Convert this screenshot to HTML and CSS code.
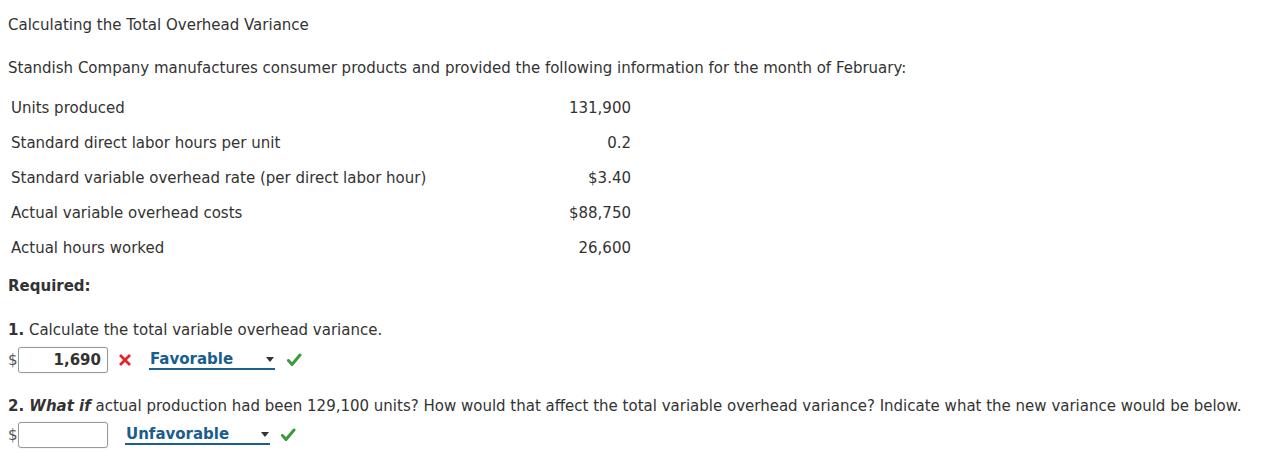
FILE: index.html
```html
<!DOCTYPE html>
<html>
<head>
<meta charset="utf-8">
<link rel="stylesheet" href="styles.css">
</head>
<body>
<div class="page">
  <p class="title">Calculating the Total Overhead Variance</p>
  <p class="intro">Standish Company manufactures consumer products and provided the following information for the month of February:</p>
  <div class="data">
    <div class="row"><span class="lbl">Units produced</span><span class="val">131,900</span></div>
    <div class="row"><span class="lbl">Standard direct labor hours per unit</span><span class="val">0.2</span></div>
    <div class="row"><span class="lbl">Standard variable overhead rate (per direct labor hour)</span><span class="val">$3.40</span></div>
    <div class="row"><span class="lbl">Actual variable overhead costs</span><span class="val">$88,750</span></div>
    <div class="row"><span class="lbl">Actual hours worked</span><span class="val">26,600</span></div>
  </div>
  <p class="req">Required:</p>
  <p class="q q1"><b>1.</b> Calculate the total variable overhead variance.</p>
  <div class="ans ans1">
    <span class="dollar">$</span><span class="box filled">1,690</span>
    <svg class="cross" viewBox="0 0 12 12" width="12" height="12"><path d="M2 2 L10 10 M10 2 L2 10" fill="none" stroke="#e0262d" stroke-width="2.8" stroke-linecap="square"/></svg>
    <span class="sel sel1">Favorable<span class="arrow"></span></span>
    <svg class="check" viewBox="0 0 16 16" width="16" height="16"><path d="M2.5 8.5 L6 12.5 L14 3" fill="none" stroke="#3c9a3c" stroke-width="3" stroke-linecap="round" stroke-linejoin="round"/></svg>
  </div>
  <p class="q q2"><b>2. <i>What if</i></b> actual production had been 129,100 units? How would that affect the total variable overhead variance? Indicate what the new variance would be below.</p>
  <div class="ans ans2">
    <span class="dollar">$</span><span class="box"></span>
    <span class="sel sel2">Unfavorable<span class="arrow"></span></span>
    <svg class="check" viewBox="0 0 16 16" width="16" height="16"><path d="M2.5 8.5 L6 12.5 L14 3" fill="none" stroke="#3c9a3c" stroke-width="3" stroke-linecap="round" stroke-linejoin="round"/></svg>
  </div>
</div>
</body>
</html>
```
FILE: styles.css
```css
html, body { margin: 0; padding: 0; background: #fff; }
body {
  font-family: "DejaVu Sans", Verdana, sans-serif;
  font-size: 15px;
  color: #333;
}
.page { padding: 0 8px; }
p { margin: 0; line-height: 18px; }
.title { padding-top: 16px; }
.intro { margin-top: 25px; }
.data { margin-top: 22px; width: 620px; padding-left: 3px; }
.row { display: flex; justify-content: space-between; height: 35px; line-height: 18px; }
.val { text-align: right; }
.req { font-weight: bold; margin-top: 3px; }
.q1 { margin-top: 26px; }
.ans { display: flex; align-items: center; height: 28px; }
.ans1 { margin-top: 7px; }
.dollar { width: 10px; color: #555; }
.box {
  width: 90px; height: 26px; border: 1px solid #999; border-radius: 3px;
  box-sizing: border-box; box-shadow: 0 0 1px #aaa;
  display: inline-flex; align-items: center; justify-content: flex-end;
  padding-right: 6px; font-weight: bold; font-size: 15px;
}
.cross { margin-left: 11px; }
.sel {
  position: relative; color: #1a5d8f; font-weight: bold; border-bottom: 2px solid #1f5f8f;
  line-height: 17px; padding-left: 1px; box-sizing: border-box;
}
.sel1 { margin-left: 18px; width: 126px; }
.sel2 { margin-left: 17px; width: 145px; }
.arrow {
  position: absolute; right: 1px; top: 6px; width: 0; height: 0;
  border-left: 4px solid transparent; border-right: 4px solid transparent; border-top: 5px solid #333;
}
.check { margin-left: 11px; }
.ans2 .check { margin-left: 10px; }
.q2 { margin-top: 23px; }
.ans2 { margin-top: 6px; }
```
